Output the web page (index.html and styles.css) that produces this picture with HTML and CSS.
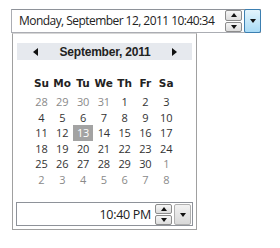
FILE: index.html
```html
<!DOCTYPE html>
<html lang="en">
<head>
    <meta charset="UTF-8">
    <title>DateTimePicker</title>
    <link rel="stylesheet" href="styles.css">
</head>
<body>

<div class="picker">
    <div class="field">Monday, September 12, 2011 10:40:34</div>
    <div class="spin">
        <div class="spin-btn"><span class="tri up"></span></div>
        <div class="spin-btn"><span class="tri down"></span></div>
    </div>
    <div class="drop blue"><span class="tri down"></span></div>
</div>

<div class="popup">
    <div class="head">
        <span class="arrow left"></span>
        <span class="month">September, 2011</span>
        <span class="arrow right"></span>
    </div>

    <div class="grid names">
        <span>Su</span><span>Mo</span><span>Tu</span><span>We</span><span>Th</span><span>Fr</span><span>Sa</span>
    </div>

    <div class="grid dates">
        <span class="other">28</span><span class="other">29</span><span class="other">30</span><span class="other">31</span><span>1</span><span>2</span><span>3</span>
        <span>4</span><span>5</span><span>6</span><span>7</span><span>8</span><span>9</span><span>10</span>
        <span>11</span><span>12</span><span class="sel">13</span><span>14</span><span>15</span><span>16</span><span>17</span>
        <span>18</span><span>19</span><span>20</span><span>21</span><span>22</span><span>23</span><span>24</span>
        <span>25</span><span>26</span><span>27</span><span>28</span><span>29</span><span>30</span><span class="other">1</span>
        <span class="other">2</span><span class="other">3</span><span class="other">4</span><span class="other">5</span><span class="other">6</span><span class="other">7</span><span class="other">8</span>
    </div>

    <div class="time">
        <div class="field time-text">10:40 PM</div>
        <div class="spin">
            <div class="spin-btn"><span class="tri up"></span></div>
            <div class="spin-btn"><span class="tri down"></span></div>
        </div>
        <div class="drop"><span class="tri down"></span></div>
    </div>
</div>

</body>
</html>
```

FILE: styles.css
```css
body {
    margin: 0;
    padding: 9px 0 0 11px;
    background: #fff;
    font-family: "Open Sans", "Noto Sans", sans-serif;
    color: #222;
}

.picker {
    display: flex;
    align-items: stretch;
    width: 250px;
    height: 24px;
    border: 1px solid #abadb3;
    border-top-color: #8e9299;
    box-sizing: border-box;
}
.field {
    flex: 1;
    min-width: 0;
    overflow: hidden;
    font-size: 12px;
    line-height: 22px;
    padding-left: 7px;
    letter-spacing: -0.55px;
    white-space: nowrap;
}

.spin {
    flex-shrink: 0;
    display: flex;
    flex-direction: column;
    gap: 1px;
    width: 17px;
    margin-right: 2px;
}
.spin-btn {
    flex: 1;
    display: flex;
    align-items: center;
    justify-content: center;
    border: 1px solid #8c8c8c;
    border-radius: 2px;
    background: linear-gradient(#f6f6f6, #dcdcdc);
}
.drop {
    flex-shrink: 0;
    width: 15px;
    display: flex;
    align-items: center;
    justify-content: center;
    border: 1px solid #b0b0b0;
    border-radius: 2px;
    background: linear-gradient(#f2f2f2, #d8d8d8);
}
.drop.blue {
    border-color: #3c7fb1;
    background: linear-gradient(#e3f4fc, #a9dbf6);
    margin: -1px -1px -1px 0;
}

.tri {
    width: 0;
    height: 0;
    border-left: 3px solid transparent;
    border-right: 3px solid transparent;
}
.tri.up {
    border-bottom: 4px solid #111;
}
.tri.down {
    border-top: 4px solid #111;
}

.popup {
    width: 185px;
    height: 197px;
    margin-left: 1px;
    box-sizing: border-box;
    border: 1px solid #a0a0a0;
    border-top-color: #d6d6d6;
    padding: 9px 4px 0 4px;
    font-family: "DejaVu Sans", sans-serif;
    font-size: 10px;
}

.head {
    display: flex;
    align-items: center;
    justify-content: space-between;
    height: 17px;
    padding: 0 15px 0 16px;
    background: #e6e9ee;
}
.month {
    font-family: "Liberation Sans", sans-serif;
    font-size: 12px;
    font-weight: bold;
    color: #222;
    letter-spacing: -0.2px;
}
.arrow {
    width: 0;
    height: 0;
    border-top: 4px solid transparent;
    border-bottom: 4px solid transparent;
}
.arrow.left {
    border-right: 5px solid #111;
}
.arrow.right {
    border-left: 5px solid #111;
}

.grid {
    display: grid;
    grid-template-columns: repeat(7, 20.8px);
    margin-left: 14px;
    text-align: center;
}
.names {
    margin-top: 16px;
    font-family: "DejaVu Sans", sans-serif;
    font-weight: bold;
    font-size: 10.5px;
    color: #222;
    line-height: 14px;
}
.dates {
    margin-top: 4px;
    grid-auto-rows: 15.5px;
    line-height: 15px;
    font-family: "Open Sans", sans-serif;
    font-size: 11px;
    letter-spacing: -0.2px;
    color: #333;
}
.dates .other {
    color: #8a8a8a;
}
.dates .sel {
    background: #a3a3a3;
    color: #fff;
}

.time {
    display: flex;
    height: 24px;
    margin: 15px -1px 0 -1px;
    border: 1px solid #8e9299;
    box-sizing: border-box;
    padding: 1px 1px 0 0;
}
.time-text {
    text-align: right;
    padding-right: 4px;
    font-family: "Open Sans", sans-serif;
    font-size: 12.5px;
    line-height: 21px;
    letter-spacing: -0.3px;
}
```
